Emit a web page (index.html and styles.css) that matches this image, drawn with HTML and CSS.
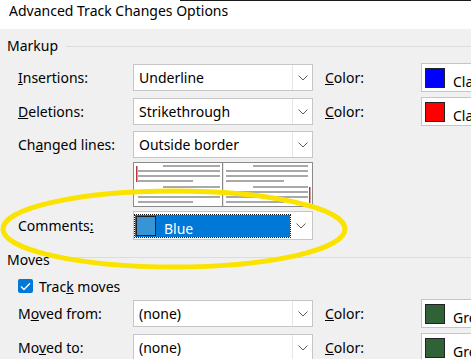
FILE: index.html
```html
<!DOCTYPE html>
<html>
<head>
<meta charset="utf-8">
<link rel="stylesheet" href="styles.css">
</head>
<body>
<div class="page">
  <div class="titlebar">Advanced Track Changes Options</div>
  <div class="dialog">
    <div class="group-head group-head--markup"><span>Markup</span><div class="rule"></div></div>

    <div class="row row--first">
      <div class="label"><u>I</u>nsertions:</div>
      <div class="select"><div class="select-text">Underline</div><div class="select-btn"><svg width="10" height="6" viewBox="0 0 10 6"><polyline points="0.5,0.5 5,5 9.5,0.5" fill="none" stroke="#5c5c5c" stroke-width="1"/></svg></div></div>
      <div class="color-label"><u>C</u>olor:</div>
      <div class="colorbox"><span class="swatch swatch--blue"></span><span class="color-name">Classic Blue</span></div>
    </div>

    <div class="row">
      <div class="label"><u>D</u>eletions:</div>
      <div class="select"><div class="select-text">Strikethrough</div><div class="select-btn"><svg width="10" height="6" viewBox="0 0 10 6"><polyline points="0.5,0.5 5,5 9.5,0.5" fill="none" stroke="#5c5c5c" stroke-width="1"/></svg></div></div>
      <div class="color-label"><u>C</u>olor:</div>
      <div class="colorbox"><span class="swatch swatch--red"></span><span class="color-name">Classic Red</span></div>
    </div>

    <div class="row row--short">
      <div class="label">Ch<u>a</u>nged lines:</div>
      <div class="select"><div class="select-text">Outside border</div><div class="select-btn"><svg width="10" height="6" viewBox="0 0 10 6"><polyline points="0.5,0.5 5,5 9.5,0.5" fill="none" stroke="#5c5c5c" stroke-width="1"/></svg></div></div>
    </div>

    <div class="preview">
      <svg width="180" height="45" viewBox="0 0 180 45">
        <rect x="0.5" y="0.5" width="179" height="44" fill="#fff" stroke="#8a8a8a"/>
        <line x1="89.5" y1="0" x2="89.5" y2="45" stroke="#8a8a8a"/>
        <line x1="90.5" y1="1" x2="90.5" y2="44" stroke="#e6e6e6"/>
        <g fill="#a9a9a9">
          <rect x="30" y="3" width="57" height="2"/>
          <rect x="5" y="8" width="82" height="2"/>
          <rect x="5" y="13" width="82" height="2"/>
          <rect x="5" y="18" width="55" height="2"/>
          <rect x="30" y="24" width="57" height="2"/>
          <rect x="5" y="29" width="82" height="2"/>
          <rect x="5" y="34" width="82" height="2"/>
          <rect x="5" y="39" width="55" height="2"/>
          <rect x="120" y="3" width="55" height="2"/>
          <rect x="93" y="8" width="82" height="2"/>
          <rect x="93" y="13" width="82" height="2"/>
          <rect x="93" y="18" width="58" height="2"/>
          <rect x="120" y="24" width="55" height="2"/>
          <rect x="93" y="29" width="82" height="2"/>
          <rect x="93" y="34" width="82" height="2"/>
          <rect x="93" y="39" width="58" height="2"/>
        </g>
        <rect x="3" y="4" width="1.5" height="16" fill="#b33a3a"/>
        <rect x="176" y="25" width="1.5" height="16" fill="#b33a3a"/>
      </svg>
    </div>

    <div class="row row--comments">
      <div class="label">Comments<u>:</u></div>
      <div class="select select--owner">
        <div class="owner-sel"><span class="swatch swatch--light"></span><span class="owner-name">Blue</span></div>
        <div class="select-btn select-btn--plain"><svg width="10" height="6" viewBox="0 0 10 6"><polyline points="0.5,0.5 5,5 9.5,0.5" fill="none" stroke="#5c5c5c" stroke-width="1"/></svg></div>
      </div>
    </div>

    <div class="group-head group-head--moves"><span>Moves</span><div class="rule"></div></div>

    <div class="check-row">
      <span class="checkbox"><svg width="11" height="9" viewBox="0 0 11 9"><polyline points="1,4.5 4,7.5 10,1.2" fill="none" stroke="#fff" stroke-width="1.4"/></svg></span>
      <span>Trac<u>k</u> moves</span>
    </div>

    <div class="row row--moved">
      <div class="label">M<u>o</u>ved from:</div>
      <div class="select"><div class="select-text">(none)</div><div class="select-btn"><svg width="10" height="6" viewBox="0 0 10 6"><polyline points="0.5,0.5 5,5 9.5,0.5" fill="none" stroke="#5c5c5c" stroke-width="1"/></svg></div></div>
      <div class="color-label"><u>C</u>olor:</div>
      <div class="colorbox"><span class="swatch swatch--green"></span><span class="color-name">Green</span></div>
    </div>

    <div class="row">
      <div class="label">Mo<u>v</u>ed to:</div>
      <div class="select"><div class="select-text">(none)</div><div class="select-btn"><svg width="10" height="6" viewBox="0 0 10 6"><polyline points="0.5,0.5 5,5 9.5,0.5" fill="none" stroke="#5c5c5c" stroke-width="1"/></svg></div></div>
      <div class="color-label"><u>C</u>olor:</div>
      <div class="colorbox"><span class="swatch swatch--green"></span><span class="color-name">Green</span></div>
    </div>
  </div>

  <svg class="annotation" width="471" height="359" viewBox="0 0 471 359">
    <ellipse cx="174" cy="229" rx="171" ry="38" fill="none" stroke="#fbe300" stroke-width="5"/>
  </svg>
</div>
</body>
</html>
```

FILE: styles.css
```css
* { box-sizing: border-box; }

html, body {
  margin: 0;
  padding: 0;
}

body {
  font-family: "Noto Sans", "Open Sans", sans-serif;
  font-size: 14px;
  color: #000;
  background: #f0f0f0;
}

.page {
  position: relative;
  width: 471px;
  height: 359px;
  overflow: hidden;
  background: #f0f0f0;
}

.titlebar {
  position: relative;
  height: 29px;
  background: #fff;
  padding-left: 9px;
  line-height: 22px;
  font-size: 14px;
  white-space: nowrap;
}

.titlebar::before {
  content: "";
  position: absolute;
  top: 0;
  left: 180px;
  right: 0;
  height: 1px;
  background: #1a1a1a;
}

.dialog {
  padding-top: 7px;
}

.group-head {
  display: flex;
  align-items: center;
  height: 20px;
  line-height: 20px;
  padding-left: 7px;
  white-space: nowrap;
}

.group-head .rule {
  flex: 1;
  height: 1px;
  background: #dcdcdc;
  margin-left: 8px;
}

.group-head--moves {
  margin-top: 10px;
}

.group-head--moves .rule {
  margin-bottom: 6px;
  margin-left: 0;
}

.row {
  display: flex;
  align-items: center;
  height: 29px;
  padding-left: 18px;
  margin-top: 5px;
  white-space: nowrap;
}

.row--first { margin-top: 7px; }
.row--short { margin-top: 4px; }
.row--comments { margin-top: 4px; }
.row--moved { margin-top: 3px; }

.label {
  width: 115px;
  flex: none;
}

.select {
  width: 180px;
  height: 27px;
  flex: none;
  display: flex;
  background: #fff;
  border: 1px solid #c6c6c6;
}

.select-text {
  flex: 1;
  padding-left: 5px;
  line-height: 25px;
}

.select-btn {
  width: 20px;
  flex: none;
  border-left: 1px solid #e6e6e6;
  display: flex;
  align-items: center;
  justify-content: center;
}

.select-btn svg { display: block; }

.select-btn--plain {
  border-left: none;
  width: 22px;
}

.select--owner {
  height: 29px;
  padding: 2px 0 2px 1px;
}

.owner-sel {
  flex: 1;
  display: flex;
  align-items: center;
  background: #0078d7;
  outline: 1px dotted #1a1a1a;
  outline-offset: 0;
  padding-left: 1px;
  margin: 1px 0 0 0;
}

.owner-name {
  color: #fff;
  margin-left: 8px;
  padding-top: 5px;
  line-height: 18px;
}

.color-label {
  width: 96px;
  flex: none;
  margin-left: 12px;
}

.colorbox {
  flex: none;
  width: 70px;
  height: 29px;
  display: flex;
  align-items: center;
  background: #fff;
  border: 1px solid #c6c6c6;
  padding-left: 3px;
  overflow: hidden;
}

.swatch {
  display: block;
  flex: none;
  width: 20px;
  height: 20px;
  border: 1px solid #222;
}

.swatch--blue { background: #0000ff; }
.swatch--red { background: #ff0000; }
.swatch--green { background: #2f6337; }
.swatch--light { background: #3795d6; height: 20px; }

.color-name {
  margin-left: 8px;
  padding-top: 8px;
  line-height: 18px;
}

.preview {
  margin-left: 133px;
  margin-top: 3px;
  height: 45px;
}

.preview svg { display: block; }

.check-row {
  display: flex;
  align-items: center;
  height: 20px;
  margin-top: 6px;
  padding-left: 18px;
  white-space: nowrap;
}

.checkbox {
  width: 15px;
  height: 14px;
  border-radius: 2px;
  background: #0078d7;
  display: flex;
  align-items: center;
  justify-content: center;
  margin-right: 6px;
}

.checkbox svg { display: block; }

.annotation {
  position: absolute;
  left: 0;
  top: 0;
  pointer-events: none;
}
```
